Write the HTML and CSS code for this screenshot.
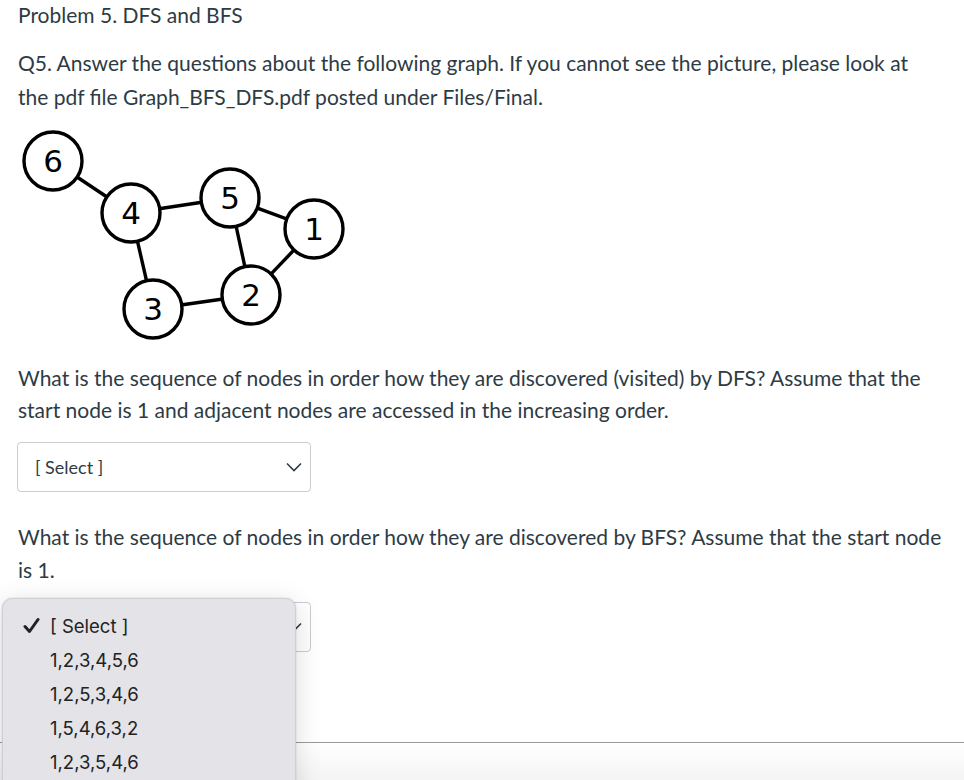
FILE: index.html
```html
<!DOCTYPE html>
<html>
<head>
<meta charset="utf-8">
<link rel="stylesheet" href="styles.css">
</head>
<body>
<div class="page">
  <p class="title">Problem 5. DFS and BFS</p>
  <p class="q">Q5. Answer the questions about the following graph. If you cannot see the picture, please look at the pdf file Graph_BFS_DFS.pdf posted under Files/Final.</p>
  <svg class="graph" width="360" height="215" viewBox="0 130 360 215" xmlns="http://www.w3.org/2000/svg">
    <g stroke="#000" stroke-width="3.4" fill="none">
      <line x1="53" y1="162" x2="131" y2="214"/>
      <line x1="131" y1="214" x2="230" y2="199"/>
      <line x1="230" y1="199" x2="314" y2="230"/>
      <line x1="230" y1="199" x2="251" y2="296"/>
      <line x1="314" y1="230" x2="251" y2="296"/>
      <line x1="131" y1="214" x2="153" y2="310"/>
      <line x1="153" y1="310" x2="251" y2="296"/>
    </g>
    <g stroke="#000" stroke-width="3.4" fill="#fff">
      <circle cx="53" cy="162" r="29"/>
      <circle cx="131" cy="214" r="29"/>
      <circle cx="230" cy="199" r="29"/>
      <circle cx="314" cy="230" r="29"/>
      <circle cx="251" cy="296" r="29"/>
      <circle cx="153" cy="310" r="29"/>
    </g>
    <g class="nodelabel" text-anchor="middle">
      <text x="53" y="173">6</text>
      <text x="131" y="225">4</text>
      <text x="230" y="210">5</text>
      <text x="314" y="241">1</text>
      <text x="251" y="307">2</text>
      <text x="153" y="321">3</text>
    </g>
  </svg>
  <p class="q q2">What is the sequence of nodes in order how they are discovered (visited) by DFS? Assume that the start node is 1 and adjacent nodes are accessed in the increasing order.</p>
  <div class="select">
    <span>[ Select ]</span>
    <svg class="chev" width="16" height="10" viewBox="0 0 16 10"><polyline points="1,1.5 8,8.5 15,1.5" fill="none" stroke="#2d3b45" stroke-width="1.6"/></svg>
  </div>
  <p class="q q3">What is the sequence of nodes in order how they are discovered by BFS? Assume that the start node is 1.</p>
  <div class="select covered">
    <svg class="chev" width="16" height="10" viewBox="0 0 16 10"><polyline points="1,1.5 8,8.5 15,1.5" fill="none" stroke="#2d3b45" stroke-width="1.6"/></svg>
  </div>
</div>
<div class="footer"></div>
<div class="menu">
  <div class="item sel">
    <svg class="check" width="17" height="17" viewBox="0 0 17 17"><polyline points="2,9.5 6.5,14.5 15,2.5" fill="none" stroke="#222" stroke-width="3" stroke-linecap="round" stroke-linejoin="round"/></svg>
    <span>[ Select ]</span>
  </div>
  <div class="item"><span>1,2,3,4,5,6</span></div>
  <div class="item"><span>1,2,5,3,4,6</span></div>
  <div class="item"><span>1,5,4,6,3,2</span></div>
  <div class="item"><span>1,2,3,5,4,6</span></div>
</div>
</body>
</html>
```

FILE: styles.css
```css
html, body {
  margin: 0;
  padding: 0;
  background: #fff;
  overflow: hidden;
}
body {
  width: 964px;
  height: 780px;
  position: relative;
  font-family: Lato, "Liberation Sans", sans-serif;
  color: #2d3b45;
}
.page {
  padding: 0 0 0 18px;
  display: flex;
  flex-direction: column;
  align-items: flex-start;
}
.title {
  margin: 1px 0 0;
  font-size: 21px;
  line-height: 27px;
}
.q {
  margin: 0;
  font-size: 21px;
  line-height: 34px;
  width: 924px;
}
.title + .q {
  margin-top: 18px;
}
.graph {
  display: block;
  margin: 15px 0 0 -18px;
}
.nodelabel {
  font-family: "DejaVu Sans", sans-serif;
  font-size: 31px;
  fill: #000;
}
.q2 {
  margin-top: 18px;
  line-height: 32px;
}
.select {
  margin-top: 16px;
  margin-left: -1px;
  box-sizing: border-box;
  width: 294px;
  height: 50px;
  border: 1px solid #c7cdd1;
  border-radius: 4px;
  display: flex;
  align-items: center;
  justify-content: space-between;
  padding: 0 8px 0 17px;
  font-size: 18px;
}
.select.covered {
  justify-content: flex-end;
}
.chev {
  display: block;
}
.q3 {
  margin-top: 28px;
  line-height: 33px;
}
.q3 + .select {
  margin-top: 16px;
}
.footer {
  position: absolute;
  left: 0;
  right: 0;
  top: 742px;
  bottom: 0;
  border-top: 1px solid #9a9a9a;
  background: linear-gradient(#ffffff, #f4f4f4);
}
.menu {
  position: absolute;
  left: 2px;
  top: 598px;
  width: 294px;
  height: 200px;
  box-sizing: border-box;
  background: #e3e3e8;
  border: 1px solid #cfcfd4;
  border-radius: 10px;
  box-shadow: 0 6px 28px rgba(0,0,0,0.14), 0 0 2px rgba(0,0,0,0.15);
  padding-top: 10px;
  font-family: Inter, "Noto Sans", sans-serif;
  font-size: 18.5px;
  color: #222;
}
.item {
  height: 34px;
  display: flex;
  align-items: center;
  padding-left: 47px;
  position: relative;
}
.check {
  position: absolute;
  left: 20px;
  top: 8px;
}
```
